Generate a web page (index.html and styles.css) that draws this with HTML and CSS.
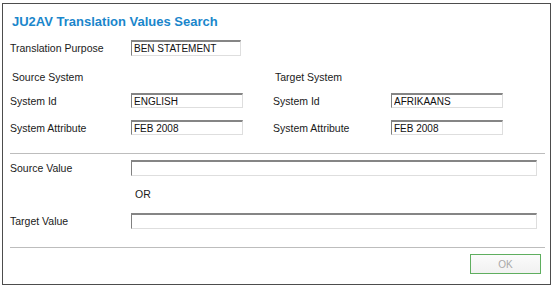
FILE: index.html
```html
<!DOCTYPE html>
<html lang="en">
<head>
    <meta charset="UTF-8">
    <meta name="viewport" content="width=device-width, initial-scale=1.0">
    <title>JU2AV Translation Values Search</title>
    <link rel="stylesheet" href="styles.css">
</head>
<body>
    <div class="frame">
        <h1 class="title">JU2AV Translation Values Search</h1>

        <div class="row purpose">
            <label class="lbl">Translation Purpose</label>
            <input class="field w-purpose" type="text" value="BEN STATEMENT" readonly>
        </div>

        <div class="systems">
            <div class="system source">
                <div class="sys-head">Source System</div>
                <div class="row sys-id">
                    <label class="lbl">System Id</label>
                    <input class="field w-sys" type="text" value="ENGLISH" readonly>
                </div>
                <div class="row sys-attr">
                    <label class="lbl">System Attribute</label>
                    <input class="field w-sys" type="text" value="FEB 2008" readonly>
                </div>
            </div>
            <div class="system target">
                <div class="sys-head">Target System</div>
                <div class="row sys-id">
                    <label class="lbl">System Id</label>
                    <input class="field w-sys" type="text" value="AFRIKAANS" readonly>
                </div>
                <div class="row sys-attr">
                    <label class="lbl">System Attribute</label>
                    <input class="field w-sys" type="text" value="FEB 2008" readonly>
                </div>
            </div>
        </div>

        <div class="sep sep-top"></div>

        <div class="row value source-value">
            <label class="lbl">Source Value</label>
            <input class="field w-value" type="text" value="">
        </div>
        <div class="or">OR</div>
        <div class="row value target-value">
            <label class="lbl">Target Value</label>
            <input class="field w-value" type="text" value="">
        </div>

        <div class="sep sep-bottom"></div>

        <div class="actions">
            <button class="btn-ok" type="button" disabled>OK</button>
        </div>
    </div>
</body>
</html>
```

FILE: styles.css
```css
body {
    margin: 0;
    padding: 3px 3px 0 2px;
    background: #fff;
    font-family: "Liberation Sans", Arial, sans-serif;
    font-size: 10.5px;
    color: #1a1a1a;
}

.frame {
    border: 1px solid #4d4d4d;
    padding: 10px 5px 10px 7px;
}

/* Заголовок */
.title {
    margin: 0;
    height: 16px;
    line-height: 16px;
    font-size: 13px;
    font-weight: bold;
    color: #1a86cb;
    padding-left: 2px;
}

.row {
    display: flex;
    align-items: center;
}

.lbl {
    width: 121px;
    flex: none;
}

.field {
    box-sizing: border-box;
    margin: 0;
    padding: 0 0 0 2px;
    font-family: "Liberation Sans", Arial, sans-serif;
    font-size: 10px;
    color: #111;
    background: #fff;
    border-top: 2px solid #858585;
    border-left: 1px solid #808080;
    border-right: 1px solid #dedede;
    border-bottom: 1px solid #dedede;
    outline: none;
}

.purpose {
    margin-top: 10px;
    height: 16px;
}
.w-purpose {
    width: 110px;
    height: 16px;
}

/* Две колонки: источник и цель */
.systems {
    display: flex;
    margin-top: 13px;
}
.system.source {
    width: 263px;
}
.system.target .lbl {
    width: 118px;
}
.sys-head {
    height: 16px;
    line-height: 16px;
    padding-left: 2px;
}
.sys-id {
    margin-top: 8px;
    height: 15px;
}
.sys-attr {
    margin-top: 12px;
    height: 15px;
}
.w-sys {
    width: 112px;
    height: 15px;
}

.sep {
    border-top: 1px solid #bdbdbd;
}
.sep-top {
    margin-top: 18px;
}
.sep-bottom {
    margin-top: 18px;
}

.source-value {
    margin-top: 6px;
    height: 16px;
}
.w-value {
    width: 406px;
    height: 16px;
}
.or {
    margin-top: 10px;
    height: 16px;
    line-height: 16px;
    padding-left: 125px;
}
.target-value {
    margin-top: 11px;
    height: 16px;
}

.actions {
    display: flex;
    justify-content: flex-end;
    padding-right: 4px;
    margin-top: 6px;
}
.btn-ok {
    width: 71px;
    height: 20px;
    margin: 0;
    padding: 0;
    border: 1px solid #5fae5f;
    background: linear-gradient(#fbfbfb, #f1f1f1);
    font-family: "Liberation Sans", Arial, sans-serif;
    font-size: 10px;
    color: #a9a9a9;
}
```
